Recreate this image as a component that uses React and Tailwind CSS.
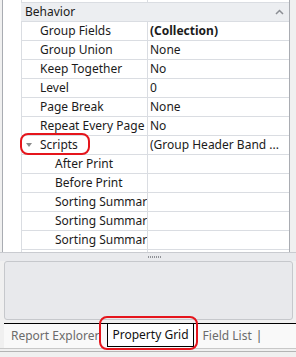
import React from "react";

const line = "border-[#dadde2]";

const Row = ({ name, value, level = 1, bold, expander }) => (
  <div className={`flex h-[19px] shrink-0 border-b border-l ${line}`}>
    <div
      className={`relative flex w-[126px] shrink-0 items-center overflow-hidden whitespace-nowrap border-r ${line} ${
        level === 2 ? "pl-[33px]" : "pl-[18px]"
      }`}
    >
      {expander && (
        <svg className="absolute left-[4px] top-[7px]" width="6" height="5" viewBox="0 0 6 5">
          <path d="M0 0H6L3 4Z" fill="#8a8a8a" />
        </svg>
      )}
      {name}
    </div>
    <div className={`flex min-w-0 flex-1 items-center overflow-hidden whitespace-nowrap pl-[2px] ${bold ? "font-bold" : ""}`}>
      {value}
    </div>
  </div>
);

const rows = [
  { name: "Group Fields", value: "(Collection)", bold: true },
  { name: "Group Union", value: "None" },
  { name: "Keep Together", value: "No" },
  { name: "Level", value: "0" },
  { name: "Page Break", value: "None" },
  { name: "Repeat Every Page", value: "No" },
  { name: "Scripts", value: "(Group Header Band ...", expander: true },
  { name: "After Print", value: "", level: 2 },
  { name: "Before Print", value: "", level: 2 },
  { name: "Sorting Summary Get Result", value: "", level: 2 },
  { name: "Sorting Summary Reset", value: "", level: 2 },
  { name: "Sorting Summary Row Changed", value: "", level: 2 },
  { name: "", value: "", level: 2 },
];

export default function App() {
  return (
    <div className="relative flex h-[357px] w-[296px] flex-col overflow-hidden bg-[#f0f0f0] font-['Noto_Sans',sans-serif] text-[12px] text-[#1b1b1b]">
      {/* grid, scrolled a little so the row above Behavior is cut */}
      <div className="ml-[2px] flex h-[252px] w-[288px] shrink-0 border-l border-r border-[#a9acb2] bg-white">
        <div className="w-[18px] shrink-0" />
        <div className="flex min-w-0 flex-1 flex-col overflow-hidden">
          <div className="-mt-[16px]">
            <Row name="" value="" />
          </div>
          <div className={`flex h-[19px] shrink-0 items-center justify-between border-b ${line} bg-[#eceef1] pl-[4px] pr-[5px]`}>
            <span>Behavior</span>
            <svg width="9" height="6" viewBox="0 0 9 6">
              <path d="M1 5L4.5 1.5L8 5" fill="none" stroke="#8b8e94" strokeWidth="1.5" />
            </svg>
          </div>
          {rows.map((r, i) => (
            <Row key={i} {...r} />
          ))}
        </div>
      </div>

      {/* splitter */}
      <div className="flex h-[9px] shrink-0 items-center justify-center border-t border-[#c9cbd0] bg-[#e9eaed]">
        <div className="ml-[12px] flex gap-[1px]">
          {Array.from({ length: 7 }).map((_, i) => (
            <div key={i} className="h-[2px] w-[1px] bg-[#8f9196]" />
          ))}
        </div>
      </div>

      {/* description */}
      <div className="mx-[4px] mr-[3px] h-[59px] shrink-0 rounded-[3px] border border-[#c6c8cc] bg-[#e8e9ec]" />

      {/* tabs */}
      <div className="ml-[4px] mt-[3px] flex h-[25px] shrink-0 items-start border-t border-black bg-[#f9f9f9] text-[#6b6b6b]">
        <div className="flex h-[23px] items-center pl-[7px] pr-[8px]">Report Explorer</div>
        <div className="-mt-[1px] flex h-[24px] items-center border border-black bg-white px-[4px] text-[#111]">
          Property Grid
        </div>
        <div className="flex h-[23px] items-center pl-[9px]">
          Field List <span className="ml-[4px] text-[#555]">|</span>
        </div>
      </div>
      <div className="h-[1px] shrink-0 bg-[#c8c8c8]" />
      <div className="mt-[2px] h-[1px] shrink-0 bg-[#b4b4b4]" />

      {/* annotations */}
      <div className="pointer-events-none absolute left-[20px] top-[133px] h-[22px] w-[70px] rounded-[8px] border-[2.5px] border-[#e5151c]" />
      <div className="pointer-events-none absolute left-[99px] top-[316px] h-[34px] w-[99px] rounded-[8px] border-[2.5px] border-[#e5151c]" />
    </div>
  );
}
